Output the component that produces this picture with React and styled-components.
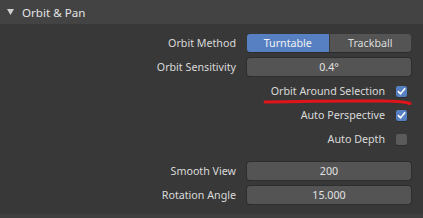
import React from "react";
import styled, { createGlobalStyle } from "styled-components";

const GlobalStyle = createGlobalStyle`
  body {
    margin: 0;
    background: #383838;
    font-family: "Noto Sans", "DejaVu Sans", sans-serif;
  }
`;

const Panel = styled.div`
  position: relative;
  width: 423px;
  height: 218px;
  background: #383838;
  display: flex;
  flex-direction: column;
  overflow: hidden;
  font-size: 10.7px;
`;

const Header = styled.div`
  height: 24px;
  background: #434343;
  display: flex;
  align-items: center;
  padding-left: 7px;
  gap: 8px;
  color: #e4e4e4;
  font-size: 11.6px;
`;

const Body = styled.div`
  padding-top: 7px;
  display: flex;
  flex-direction: column;
`;

const Row = styled.div`
  display: grid;
  grid-template-columns: 236px 164px;
  column-gap: 11px;
  height: 24px;
  align-items: center;
`;

const Label = styled.div`
  text-align: right;
  color: #dadada;
`;

const Segmented = styled.div`
  display: flex;
  height: 18px;
  border-radius: 3px;
  overflow: hidden;
  box-shadow: 0 1px 0 #2c2c2c;
`;

const Segment = styled.div`
  flex: 1;
  display: flex;
  align-items: center;
  justify-content: center;
  color: ${(p) => (p.$active ? "#f2f2f2" : "#dcdcdc")};
  background: ${(p) => (p.$active ? "#5680c2" : "#545454")};
  & + & {
    border-left: 1px solid #3a3a3a;
  }
`;

const Field = styled.div`
  height: 18px;
  border-radius: 3px;
  background: #545454;
  box-shadow: 0 0 0 1px #2e2e2e;
  display: flex;
  align-items: center;
  justify-content: center;
  color: #e2e2e2;
`;

const CheckCell = styled.div`
  display: flex;
  justify-content: flex-end;
  align-items: center;
  gap: 11px;
  padding-right: 4px;
  color: #dadada;
`;

const Box = styled.div`
  width: 11px;
  height: 11px;
  border-radius: 2px;
  background: ${(p) => (p.$on ? "#5680c2" : "#5a5a5a")};
  box-shadow: 0 1px 0 #2c2c2c;
  display: flex;
  align-items: center;
  justify-content: center;
`;

const Spacer = styled.div`
  height: 8px;
`;

const Footer = styled.div`
  margin-top: auto;
  height: 4px;
  background: #3f3f3f;
`;

const Mark = styled.svg`
  position: absolute;
  left: 0;
  top: 0;
  pointer-events: none;
`;

const Triangle = () => (
  <svg width="7" height="6" viewBox="0 0 7 6">
    <path d="M0 0 H7 L3.5 6 Z" fill="#cfcfcf" />
  </svg>
);

const Checkbox = ({ on }) => (
  <Box $on={on}>
    {on && (
      <svg width="9" height="9" viewBox="0 0 10 10">
        <path
          d="M1.5 5.2 L4 7.6 L8.6 2"
          fill="none"
          stroke="#ffffff"
          strokeWidth="1.8"
          strokeLinecap="round"
          strokeLinejoin="round"
        />
      </svg>
    )}
  </Box>
);

const App = () => {
  return (
    <>
      <GlobalStyle />
      <Panel>
        <Header>
          <Triangle />
          <span>Orbit &amp; Pan</span>
        </Header>
        <Body>
          <Row>
            <Label>Orbit Method</Label>
            <Segmented>
              <Segment $active>Turntable</Segment>
              <Segment>Trackball</Segment>
            </Segmented>
          </Row>
          <Row>
            <Label>Orbit Sensitivity</Label>
            <Field>0.4°</Field>
          </Row>
          <Row>
            <span />
            <CheckCell>
              Orbit Around Selection
              <Checkbox on />
            </CheckCell>
          </Row>
          <Row>
            <span />
            <CheckCell>
              Auto Perspective
              <Checkbox on />
            </CheckCell>
          </Row>
          <Row>
            <span />
            <CheckCell>
              Auto Depth
              <Checkbox />
            </CheckCell>
          </Row>
          <Spacer />
          <Row>
            <Label>Smooth View</Label>
            <Field>200</Field>
          </Row>
          <Row>
            <Label>Rotation Angle</Label>
            <Field>15.000</Field>
          </Row>
        </Body>
        <Footer />
        <Mark width="423" height="218">
          <path
            d="M265 102 Q 330 100.5 385 101 Q 405 101.5 410 103.5"
            fill="none"
            stroke="#e0141a"
            strokeWidth="3"
            strokeLinecap="round"
          />
        </Mark>
      </Panel>
    </>
  );
};

export default App;
